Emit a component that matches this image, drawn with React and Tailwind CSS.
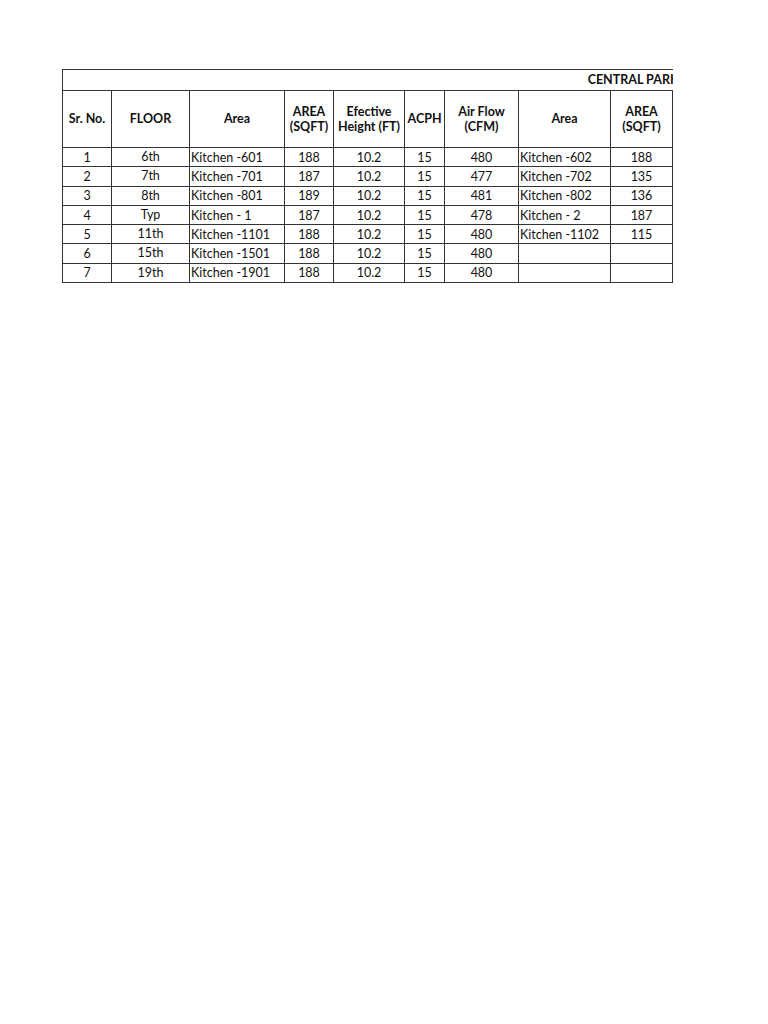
import React from "react";

const rows = [
  ["1", "6th", "Kitchen -601", "188", "10.2", "15", "480", "Kitchen -602", "188"],
  ["2", "7th", "Kitchen -701", "187", "10.2", "15", "477", "Kitchen -702", "135"],
  ["3", "8th", "Kitchen -801", "189", "10.2", "15", "481", "Kitchen -802", "136"],
  ["4", "Typ", "Kitchen - 1", "187", "10.2", "15", "478", "Kitchen - 2", "187"],
  ["5", "11th", "Kitchen -1101", "188", "10.2", "15", "480", "Kitchen -1102", "115"],
  ["6", "15th", "Kitchen -1501", "188", "10.2", "15", "480", "", ""],
  ["7", "19th", "Kitchen -1901", "188", "10.2", "15", "480", "", ""],
];

const widths = [49, 78, 95, 49, 71, 40, 74, 92, 62];

export default function App() {
  return (
    <div className="w-[768px] h-[1024px] bg-white pt-[69px] pl-[62px]" style={{ fontFamily: "Lato, 'Open Sans', sans-serif" }}>
      <table className="border-collapse table-fixed text-[12.5px] text-[#111]" style={{ width: 610 }}>
        <colgroup>
          {widths.map((w, i) => (
            <col key={i} style={{ width: w }} />
          ))}
        </colgroup>
        <tbody>
          <tr className="h-[20px]">
            <td colSpan={9} className="border-t border-l border-[#333] p-0 overflow-hidden">
              <div className="flex justify-end overflow-hidden h-[20px]">
                <span className="font-bold whitespace-nowrap mr-[-6px] leading-[20px]">CENTRAL PARK</span>
              </div>
            </td>
          </tr>
          <tr className="h-[57px] font-bold">
            <td className="border border-[#333] text-center">Sr. No.</td>
            <td className="border border-[#333] text-center">FLOOR</td>
            <td className="border border-[#333] text-center">Area</td>
            <td className="border border-[#333] text-center leading-[15px]">AREA<br />(SQFT)</td>
            <td className="border border-[#333] text-center leading-[15px]">Efective<br />Height (FT)</td>
            <td className="border border-[#333] text-center">ACPH</td>
            <td className="border border-[#333] text-center leading-[15px]">Air Flow<br />(CFM)</td>
            <td className="border border-[#333] text-center">Area</td>
            <td className="border border-[#333] text-center leading-[15px]">AREA<br />(SQFT)</td>
          </tr>
          {rows.map((r, i) => (
            <tr key={i} className="h-[19.3px] leading-[17px]">
              {r.map((c, j) => (
                <td
                  key={j}
                  className={
                    "border border-[#333] p-0 whitespace-nowrap overflow-hidden " +
                    (j === 2 || j === 7 ? "text-left pl-[1px]" : "text-center") +
                    (j === 1 ? " align-top" : "")
                  }
                >
                  {c}
                </td>
              ))}
            </tr>
          ))}
        </tbody>
      </table>
    </div>
  );
}
